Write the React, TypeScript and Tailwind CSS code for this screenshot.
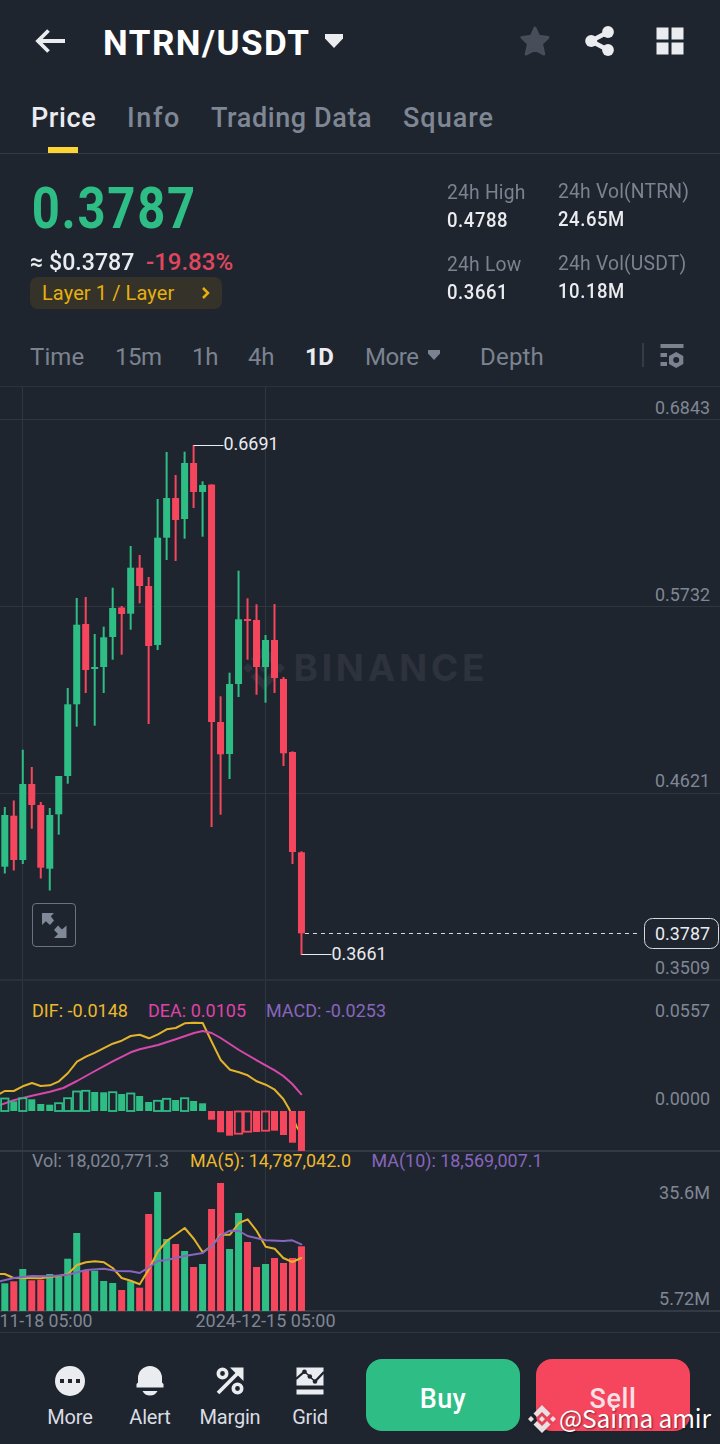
import React from "react";

type Candle = [up: 0 | 1, high: number, low: number, top: number, bottom: number];

const candles: Candle[] = [
  [1, 807, 873.5, 815, 866.7], [0, 800.5, 870.5, 815.7, 860], [1, 749.7, 864, 784, 860],
  [0, 767, 828.7, 784, 805], [0, 802, 878.5, 805, 867.7], [1, 808, 890.5, 815, 868.7],
  [1, 776, 834.7, 776, 814.3], [1, 688, 783.7, 704.3, 776], [1, 598, 726.7, 624.7, 704.3],
  [0, 597, 693, 624, 670], [1, 634, 725.7, 667, 669], [1, 626.7, 693, 637.3, 667],
  [1, 587.7, 659.7, 608, 637], [0, 606, 654.7, 607.5, 614], [1, 546, 629.7, 567.7, 613.7],
  [0, 555, 603.3, 567.7, 586], [0, 577, 724, 586, 646], [1, 499, 650, 537.7, 645],
  [1, 452, 560, 498, 537.7], [0, 475, 561, 498, 520], [1, 451.7, 538.7, 463, 519],
  [0, 445, 508, 463, 492], [1, 481.3, 536.7, 485, 492], [0, 484.3, 827, 484.6, 722],
  [0, 696.3, 814.7, 722, 754.3], [1, 672.7, 779, 684, 754], [1, 570.7, 697, 619.3, 684],
  [0, 598.3, 659.7, 619, 621], [0, 604.3, 694.7, 620, 667], [1, 635, 702.7, 640, 667],
  [0, 604, 693, 640, 678], [0, 677, 766, 679, 753.3], [0, 751.3, 864, 752, 852],
  [0, 851.3, 955, 852.3, 933.3],
];

/* Histogram edge for every bar; a bar is hollow where the second value is 1. */
const macd: [number, 0 | 1][] = [
  [1098, 1], [1101.3, 0], [1097.7, 1], [1099.3, 0], [1104, 0], [1104.7, 0], [1102.7, 1],
  [1097.7, 1], [1091, 1], [1090.3, 1], [1092, 0], [1092.3, 0], [1091.7, 1], [1094, 0],
  [1093, 1], [1096, 0], [1102, 0], [1100.3, 1], [1098.3, 1], [1100, 0], [1097.7, 1],
  [1101, 0], [1103.3, 0], [1119.7, 0], [1132.3, 0], [1135.7, 0], [1133.7, 1], [1131.7, 1],
  [1132, 0], [1130.7, 1], [1130.7, 0], [1135, 0], [1142.7, 0], [1151, 0],
];

const volume = [
  1283.3, 1281.3, 1269, 1280.3, 1279.7, 1274, 1276.7, 1258.7, 1233, 1270.3, 1270.7, 1281, 1283,
  1290, 1281.3, 1287.7, 1214, 1192, 1239, 1244, 1251, 1267, 1264, 1209, 1183, 1249, 1213, 1242,
  1267, 1264, 1258, 1263, 1258, 1246.3,
];

const DIF = "0,1093.7 4.7,1091 13.7,1091 22.7,1086.3 32,1083 40.7,1086 50,1085.3 59,1081.3 68,1073 77,1061.7 86,1056.7 95,1052.7 112.7,1043.7 121.7,1040.7 130.7,1036 139.7,1034.7 149,1038.3 158,1034.3 166.7,1029.3 175.7,1028 184.7,1023.3 194,1022.7 202.7,1023 211.7,1041.7 220.7,1060 230,1069.7 239,1072.3 247.7,1075.3 256.7,1081.3 265.7,1084.7 274.7,1089.7 283.3,1099 289.3,1109.3 296.7,1126.7 301.3,1134";
const DEA = "0,1105 13.7,1100.3 32,1095.7 50,1091.7 63.3,1088 77,1081 95,1071 112.7,1061.3 130.7,1052.3 139.7,1049.3 158,1045 175.7,1039.3 194,1033 202.7,1031 211.7,1033 220.7,1038 239,1050 256.7,1060.3 274.7,1070.3 283.3,1076 292.3,1084 301.3,1094.3";
const MA5 = "0,1274 4.7,1274 13.7,1278 22.7,1278 40.7,1278.3 50,1277 59,1276 68,1274 77,1265 86,1262.3 95,1261.3 104,1262.3 112.7,1268 121.7,1278 130.7,1280.7 139.7,1284.3 149,1269 158,1251.3 166.7,1241 184.7,1228 194,1239 202.7,1252.3 211.7,1246 220.7,1234.7 230,1234.7 239,1223 247.7,1219.3 256.7,1231 265.7,1246.7 274.7,1248.7 283.3,1258 292.3,1262 301.3,1258";
const MA10 = "0,1281.3 13.7,1278 32,1276 50,1276.3 68,1274.7 86,1270 104,1268.7 116.7,1271 130.7,1271.3 139.7,1273 149,1267.3 158,1261 166.7,1260 184.7,1256 202.7,1253 211.7,1246 220.7,1235.7 230,1230.7 239,1231 247.7,1236 265.7,1240.3 283.3,1241 292.3,1240.3 301.3,1244.3";

const GREEN = "#2ebd85";
const RED = "#f6465d";
const centre = (i: number) => 4.8 + i * 8.99;

function Label(p: { x: number; y: number; w: number; fill?: string; children: string }) {
  return (
    <text x={p.x} y={p.y} textLength={p.w} lengthAdjust="spacingAndGlyphs" fill={p.fill ?? "#7f8794"}>
      {p.children}
    </text>
  );
}

function Chart() {
  return (
    <svg viewBox="0 387 720 945" className="block h-[945px] w-[720px] shrink-0 font-['Roboto',sans-serif] text-[18px]">
      <g stroke="#2f363f" strokeWidth="1">
        <path d="M0 419.5H720M0 606.5H720M0 793.5H720M22.5 387V1311M265.5 387V1311" />
        <path d="M0 980H720" strokeWidth="2" stroke="#29303a" />
        <path d="M0 1151H720M0 1311H720" strokeWidth="2" stroke="#333a43" />
      </g>

      <g fill="#2d323d">
        <g transform="translate(264 668)">
          <path d="M0-22 13-9 8-4 0-12-8-4-13-9ZM0 22 13 9 8 4 0 12-8 4-13 9ZM0-5 5 0 0 5-5 0ZM16-5 21 0 16 5 11 0ZM-16-5-11 0-16 5-21 0Z" />
        </g>
        <text x="293.5" y="681" fontSize="37" fontWeight="700" textLength="191" className="font-['Inter',sans-serif]">
          BINANCE
        </text>
      </g>

      {candles.map(([up, high, low, top, bottom], i) => (
        <g key={i} fill={up ? GREEN : RED}>
          <rect x={centre(i) - 1} y={high} width="2" height={low - high} />
          <rect x={centre(i) - 3.5} y={top} width="7" height={bottom - top} />
        </g>
      ))}

      <path d="M193.5 445.5H223.5M301.5 954.5H331.5" stroke="#eaecef" strokeWidth="1.2" />
      <Label x={223.5} y={450} w={55} fill="#eaecef">0.6691</Label>
      <Label x={331.5} y={960} w={55} fill="#eaecef">0.3661</Label>
      <path d="M305 933.5H638" stroke="#d5d9df" strokeWidth="1.2" strokeDasharray="4 4" />

      <Label x={655} y={414} w={55}>0.6843</Label>
      <Label x={655} y={601} w={55}>0.5732</Label>
      <Label x={655} y={787} w={55}>0.4621</Label>
      <rect x="644.5" y="918.5" width="74" height="30" rx="8" fill="#1f252f" stroke="#d5d9df" />
      <Label x={655} y={940} w={55} fill="#eaecef">0.3787</Label>
      <Label x={655} y={974} w={55}>0.3509</Label>
      <Label x={655} y={1017} w={55}>0.0557</Label>
      <Label x={655} y={1105} w={55}>0.0000</Label>
      <Label x={659} y={1199} w={51}>35.6M</Label>
      <Label x={659} y={1305} w={51}>5.72M</Label>

      <g transform="translate(32 903)">
        <rect x="0.5" y="0.5" width="43" height="43" rx="3.5" fill="none" stroke="#6b7380" />
        <path d="M10 10H22L18.8 13.2 22 17.5 18 22 13.8 18.2 10 22ZM34.5 35H22L26 31 22 27 26 22.5 30 26.5 34.5 22.5Z" fill="#7f8998" />
      </g>

      <g fill="none" strokeWidth="2" strokeLinejoin="round" strokeLinecap="round">
        <polyline points={DIF} stroke="#e2b32b" />
        <polyline points={DEA} stroke="#d648aa" />
      </g>
      {macd.map(([edge, hollow], i) => {
        const colour = i < 23 ? GREEN : RED;
        const y = Math.min(edge, 1111);
        const h = Math.abs(1111 - edge);
        return hollow ? (
          <rect key={i} x={centre(i) - 3.7} y={y + 0.5} width="7.4" height={h - 0.5} fill="none" stroke={colour} strokeWidth="1.8" />
        ) : (
          <rect key={i} x={centre(i) - 3.5} y={y} width="7" height={h} fill={colour} />
        );
      })}
      <Label x={32} y={1017} w={96} fill="#ecb92c">DIF: -0.0148</Label>
      <Label x={148} y={1017} w={98} fill="#dc44a7">DEA: 0.0105</Label>
      <Label x={266} y={1017} w={120} fill="#8766bd">MACD: -0.0253</Label>

      {volume.map((y, i) => (
        <rect key={i} x={centre(i) - 3.5} y={y} width="7" height={1311 - y} fill={candles[i][0] ? GREEN : RED} />
      ))}
      <g fill="none" strokeWidth="2" strokeLinejoin="round" strokeLinecap="round">
        <polyline points={MA5} stroke="#e2b32b" />
        <polyline points={MA10} stroke="#8766bd" />
      </g>
      <Label x={32} y={1167} w={137}>Vol: 18,020,771.3</Label>
      <Label x={190} y={1167} w={161} fill="#ecb92c">MA(5): 14,787,042.0</Label>
      <Label x={371.5} y={1167} w={171} fill="#8766bd">MA(10): 18,569,007.1</Label>
      <Label x={-0.5} y={1327} w={93}>11-18 05:00</Label>
      <Label x={195.5} y={1327} w={140}>2024-12-15 05:00</Label>
    </svg>
  );
}

function Header() {
  return (
    <header className="flex h-[84px] items-center pl-[34px] pr-9 text-[#eaecef]">
      <svg viewBox="0 0 32 26" className="mb-0.5 h-[26px] w-8">
        <path d="M31 13H4M14.5 2.5 4 13 14.5 23.5" fill="none" stroke="currentColor" strokeWidth="3.8" />
      </svg>
      <h1 className="ml-[37px] mt-0.5 w-[222px] whitespace-nowrap text-[35px] font-bold leading-none tracking-[1.5px] text-white">NTRN/USDT</h1>
      <svg viewBox="0 0 18 14" className="mb-0.5 h-3.5 w-[18px]" fill="currentColor">
        <path d="M0 0H18V4.5L9 14 0 4.5Z" />
      </svg>
      <div className="mb-0.5 ml-auto flex items-center">
        <svg viewBox="0 0 30 30" className="h-[30px] w-[30px]">
          <path d="M15 2 18.8 10.3 28 11.4 21.5 17.8 23.8 28 15 23.5 6.2 28 8.5 17.8 2 11.4 11.2 10.3Z" fill="#474d59" stroke="#474d59" strokeWidth="3" strokeLinejoin="round" />
        </svg>
        <svg viewBox="0 0 30 30" className="ml-[35px] h-[30px] w-[30px]" fill="currentColor">
          <path d="M6 15 23 6M6 15 23 24" stroke="currentColor" strokeWidth="4.6" />
          <circle cx="6.2" cy="15" r="6" />
          <circle cx="23" cy="6" r="5.9" />
          <circle cx="23" cy="24" r="5.9" />
        </svg>
        <svg viewBox="0 0 28 28" className="ml-[41px] h-7 w-7" fill="currentColor">
          <path d="M.5.5H12.5V12.5H.5ZM15.5.5H27.5V12.5H15.5ZM.5 15.5H12.5V27.5H.5ZM15.5 15.5H27.5V27.5H15.5Z" />
        </svg>
      </div>
    </header>
  );
}

function Tabs() {
  return (
    <nav className="flex h-[70px] border-b border-[#343b45] pl-[31px] text-[27px] font-medium leading-[68px] text-[#7f8794]">
      <div className="flex w-[96px] flex-col text-[#eaecef]">
        <span className="h-[63px] tracking-[0.6px]">Price</span>
        <span className="ml-[17px] h-1.5 w-[30px] bg-[#fcd535]" />
      </div>
      <span className="w-[84px] tracking-[1.6px]">Info</span>
      <span className="w-[192px] whitespace-nowrap tracking-[0.6px]">Trading Data</span>
      <span className="tracking-[1px]">Square</span>
    </nav>
  );
}

function Stat({ label, value }: { label: string; value: string }) {
  return (
    <div className="flex h-[72px] flex-col leading-[28px]">
      <span className="origin-left scale-x-[0.965] whitespace-nowrap text-[20px] tracking-[0.2px] text-[#7b8390]">{label}</span>
      <span className="relative top-px origin-left scale-x-[0.95] text-[19.5px] font-medium tracking-[0.6px] text-[#eaecef]">{value}</span>
    </div>
  );
}

function Summary() {
  return (
    <section className="flex h-[174px] pl-[30px]">
      <div className="flex w-[417px] flex-col items-start pt-[30px]">
        <span className="inline-block h-[49px] origin-left scale-x-[0.86] pl-0.5 text-[57px] font-bold leading-[49px] tracking-[2px] text-[#2ebd85]">0.3787</span>
        <div className="mt-[14px] flex h-[30px] text-[24px] font-medium leading-[30px] text-[#eaecef]">
          <span className="w-[116px] origin-left scale-x-[0.965] whitespace-nowrap">≈ $0.3787</span>
          <span className="text-[#e0475f]">-19.83%</span>
        </div>
        <div className="flex h-8 w-48 items-center justify-between rounded-lg bg-[#353229] pl-3 pr-3 text-[20px] leading-8 text-[#e5b00f]">
          <span className="tracking-[0.1px]">Layer 1 / Layer</span>
          <svg viewBox="0 0 8 12" className="h-3 w-2">
            <path d="M1 1 6 6 1 11" fill="none" stroke="currentColor" strokeWidth="2.5" />
          </svg>
        </div>
      </div>
      <div className="w-[111px] pt-[24px]">
        <Stat label="24h High" value="0.4788" />
        <Stat label="24h Low" value="0.3661" />
      </div>
      <div className="pt-[23px]">
        <Stat label="24h Vol(NTRN)" value="24.65M" />
        <Stat label="24h Vol(USDT)" value="10.18M" />
      </div>
    </section>
  );
}

function Intervals() {
  return (
    <div className="flex h-[59px] items-center border-b border-[#2b323c] pl-[30px] text-[24px] leading-none tracking-[0.1px] text-[#7b8390]">
      <span className="w-[85px]">Time</span>
      <span className="w-[77px] tracking-[-0.5px]">15m</span>
      <span className="w-[56px] tracking-[-0.3px]">1h</span>
      <span className="w-[57px] tracking-[-0.3px]">4h</span>
      <span className="w-[60px] font-bold tracking-[-0.4px] text-[#eaecef]">1D</span>
      <span className="w-[63px] tracking-[-0.4px]">More</span>
      <svg viewBox="0 0 12 10" className="mb-1 h-2.5 w-3" fill="currentColor">
        <path d="M0 0H12V3.5L6 10 0 3.5Z" />
      </svg>
      <span className="ml-10 tracking-[0.2px]">Depth</span>
      <span className="ml-auto mb-1 h-6 w-0.5 bg-[#343b45]" />
      <svg viewBox="0 0 24 24" className="mb-0.5 ml-4 mr-9 h-6 w-6" fill="currentColor">
        <path d="M.5 0H23.5V4H.5ZM.5 9H7V13H.5ZM.5 18H7V22H.5Z" />
        <path fillRule="evenodd" d="M16.2 8 23.3 12V20L16.2 24 9 20V12ZM16.2 13A3 3 0 1 0 16.2 19 3 3 0 1 0 16.2 13Z" />
      </svg>
    </div>
  );
}

function Tool({ label, children }: { label: string; children: React.ReactNode }) {
  return (
    <div className="flex w-20 flex-col items-center pt-[33px]">
      <svg viewBox="0 0 30 30" className="h-[30px] w-[30px]" fill="#eaecef">
        {children}
      </svg>
      <span className="mt-[7px] text-[20px] leading-[28px] tracking-[-0.2px] text-[#d9dde2]">{label}</span>
    </div>
  );
}

function Footer() {
  return (
    <footer className="relative flex h-[112px] border-t border-[#2f363f] pl-[30px]">
      <Tool label="More">
        <circle cx="15" cy="15" r="15" />
        <path d="M5 13H9V17H5ZM13 13H17V17H13ZM21 13H25V17H21Z" fill="#1f252f" />
      </Tool>
      <Tool label="Alert">
        <path d="M1.5 21.5V18L3 16.5V12A12 12 0 0 1 27 12V16.5L28.5 18V21.5ZM7.5 25H22.5A8.5 8.5 0 0 1 7.5 25Z" />
      </Tool>
      <Tool label="Margin">
        <g fill="none" stroke="#eaecef">
          <circle cx="7.5" cy="7.5" r="4.2" strokeWidth="3.6" />
          <circle cx="22.5" cy="22.5" r="4.2" strokeWidth="3.6" />
          <path d="M3 27 24 6" strokeWidth="3.8" />
        </g>
        <path d="M15 1.5H28.5V15Z" />
      </Tool>
      <Tool label="Grid">
        <path d="M1.5 1.5H28.5V19.5H1.5ZM1.5 23.5H28.5V28.5H1.5Z" />
        <path d="M1 13 9.5 5.5M20 15.5 29 6" fill="none" stroke="#1f252f" strokeWidth="2.3" />
        <path d="M9.5 5.5 20 15.5" fill="none" stroke="#1f252f" strokeWidth="1.6" />
        <circle cx="9.5" cy="5.7" r="2.3" fill="#1f252f" />
        <circle cx="14.8" cy="10.5" r="2.3" fill="#1f252f" />
        <circle cx="20" cy="15.5" r="2.3" fill="#1f252f" />
      </Tool>
      <button className="ml-4 mt-[26px] h-[72px] w-[154px] rounded-2xl bg-[#2ebd85] pt-1.5 text-[27px] font-medium text-white">
        <span className="block h-[66px] leading-[68px] tracking-[0.4px]">Buy</span>
      </button>
      <button className="ml-4 mt-[26px] h-[72px] w-[154px] rounded-2xl bg-[#f6465d] pt-1.5 text-[27px] font-medium text-[#fbe0e6]">
        <span className="block h-[66px] leading-[68px] tracking-[0.6px]">Sell</span>
      </button>
      <div className="absolute left-[528px] top-[66px] flex h-10 items-center text-white">
        <svg viewBox="-14 -14 28 28" className="h-7 w-7 drop-shadow-sm" fill="#e9dfe2">
          <path d="M0-14 8.5-5.5 5-2 0-7-5-2-8.5-5.5ZM0 14 8.5 5.5 5 2 0 7-5 2-8.5 5.5ZM0-3 3 0 0 3-3 0ZM11-3 14 0 11 3 8 0ZM-11-3-8 0-11 3-14 0Z" />
        </svg>
        <span className="mb-0.5 ml-[3px] whitespace-nowrap font-['Noto_Sans_CJK_SC',sans-serif] text-[24.5px] leading-[38px] tracking-[-0.1px] [text-shadow:1px_1px_2px_#0008]">@Saima amir</span>
      </div>
    </footer>
  );
}

export default function App() {
  return (
    <main className="flex h-[1444px] w-[720px] flex-col overflow-hidden bg-[#1f252f] font-['Roboto',sans-serif]">
      <Header />
      <Tabs />
      <Summary />
      <Intervals />
      <Chart />
      <Footer />
    </main>
  );
}
